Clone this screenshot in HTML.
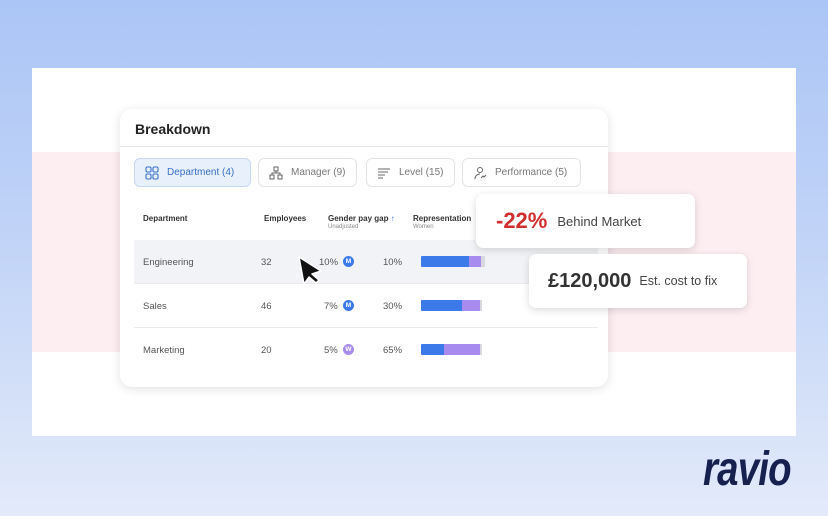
<!DOCTYPE html>
<html><head><meta charset="utf-8"><style>
*{margin:0;padding:0;box-sizing:border-box}
body{width:828px;height:516px;overflow:hidden;position:relative;font-family:"Liberation Sans",sans-serif;background:linear-gradient(180deg,#abc5f6 0%,#c3d5f7 50%,#e3eafa 100%)}
.abs{position:absolute}
.panel{left:32px;top:68px;width:764px;height:368px;background:#fff}
.pink{left:32px;top:152px;width:764px;height:200px;background:#fdeef2}
.card{left:120px;top:109px;width:488px;height:278px;background:#fff;border-radius:12px;box-shadow:0 2px 10px rgba(0,0,0,.12)}
.title{left:15px;top:12px;font-size:14px;font-weight:bold;color:#222}
.hr{left:0;top:37px;width:488px;height:1px;background:#e6e6ea}
.tab{top:49px;height:29px;border:1px solid #e4e4e8;border-radius:6px;font-size:10px;color:#777;display:flex;align-items:center;padding-left:10px;gap:8px}
.tab.on{background:#e8f0fc;border-color:#c6d7f3;color:#3a6fc9}
.th{font-size:8px;font-weight:bold;color:#333;top:105px}
.sub{font-size:6px;color:#888;top:115px}
.row{left:14px;width:464px;height:43px}
.t{font-size:9.5px;color:#555}
.c{width:11px;height:11px;border-radius:50%;color:#fff;font-size:6.5px;font-weight:bold;text-align:center;line-height:11px}
.bar{height:11px;display:flex;width:64px;border-radius:1px;overflow:hidden}
.pop{background:#fff;border-radius:7px;box-shadow:0 2px 8px rgba(0,0,0,.15);display:flex;align-items:center}
</style></head><body>
<div class="abs panel"></div>
<div class="abs pink"></div>
<div class="abs card">
 <div class="abs title">Breakdown</div>
 <div class="abs hr"></div>
 <div class="abs tab on" style="left:14px;width:117px"><svg width="14" height="14" viewBox="0 0 14 14" fill="none" stroke="#3a6fc9" stroke-width="1.1"><rect x="1" y="1" width="5" height="5" rx="1.2"/><rect x="8" y="1" width="5" height="5" rx="1.2"/><rect x="1" y="8" width="5" height="5" rx="1.2"/><rect x="8" y="8" width="5" height="5" rx="1.2"/></svg>Department (4)</div>
 <div class="abs tab" style="left:138px;width:99px"><svg width="14" height="14" viewBox="0 0 14 14" fill="none" stroke="#666" stroke-width="1"><rect x="5" y="1" width="4" height="4"/><rect x="1" y="9" width="4" height="4"/><rect x="9" y="9" width="4" height="4"/><path d="M7 5v2M3 9V7h8v2"/></svg>Manager (9)</div>
 <div class="abs tab" style="left:246px;width:89px"><svg width="14" height="14" viewBox="0 0 14 14" fill="none" stroke="#666" stroke-width="1"><path d="M1 3h12M1 6h10M1 9h7M1 12h5"/></svg>Level (15)</div>
 <div class="abs tab" style="left:342px;width:119px"><svg width="14" height="14" viewBox="0 0 14 14" fill="none" stroke="#666" stroke-width="1"><circle cx="7" cy="4" r="2.5"/><path d="M2 13c0-3 2-5 5-5M8 12l2-2 1 1 2-2"/></svg>Performance (5)</div>
 <div class="abs th" style="left:23px">Department</div>
 <div class="abs th" style="left:144px">Employees</div>
 <div class="abs th" style="left:208px">Gender pay gap <span style="color:#3a6fc9">↑</span></div>
 <div class="abs sub" style="left:208px">Unadjusted</div>
 <div class="abs th" style="left:293px">Representation</div>
 <div class="abs sub" style="left:293px">Women</div>

 <div class="abs row" style="top:131px;background:#f2f3f6"></div>
 <div class="abs" style="left:14px;top:174px;width:464px;height:1px;background:#ebebee"></div>
 <div class="abs" style="left:14px;top:218px;width:464px;height:1px;background:#ebebee"></div>

 <div class="abs t" style="left:23px;top:148px">Engineering</div>
 <div class="abs t" style="left:141px;top:148px">32</div>
 <div class="abs t" style="left:199px;top:148px">10%</div>
 <div class="abs c" style="left:223px;top:147px;background:#3b7ae8">M</div>
 <div class="abs t" style="left:263px;top:148px">10%</div>
 <div class="abs bar" style="left:301px;top:147px"><div style="width:48px;background:#3b7ae8"></div><div style="width:12px;background:#a78bef"></div><div style="width:4px;background:#d8d8de"></div></div>

 <div class="abs t" style="left:23px;top:192px">Sales</div>
 <div class="abs t" style="left:141px;top:192px">46</div>
 <div class="abs t" style="left:204px;top:192px">7%</div>
 <div class="abs c" style="left:223px;top:191px;background:#3b7ae8">M</div>
 <div class="abs t" style="left:263px;top:192px">30%</div>
 <div class="abs bar" style="left:301px;top:191px"><div style="width:41px;background:#3b7ae8"></div><div style="width:18px;background:#a78bef"></div><div style="width:2px;background:#d8d8de"></div></div>

 <div class="abs t" style="left:23px;top:236px">Marketing</div>
 <div class="abs t" style="left:141px;top:236px">20</div>
 <div class="abs t" style="left:204px;top:236px">5%</div>
 <div class="abs c" style="left:223px;top:235px;background:#a78bef">W</div>
 <div class="abs t" style="left:263px;top:236px">65%</div>
 <div class="abs bar" style="left:301px;top:235px"><div style="width:23px;background:#3b7ae8"></div><div style="width:36px;background:#a78bef"></div><div style="width:2px;background:#d8d8de"></div></div>

 <svg class="abs" style="left:174px;top:144px" width="34" height="36" viewBox="0 0 34 36"><path d="M5 4 L10 31 L15 24 L22 30 L25 27 L18 21 L27 18 Z" fill="#111" stroke="#fff" stroke-width="1.5" stroke-linejoin="round"/></svg>
</div>
<div class="abs pop" style="left:476px;top:194px;width:219px;height:54px;padding-left:20px"><span style="color:#d12f2f;font-size:22px;font-weight:bold">-22%</span><span style="font-size:13px;color:#444;margin-left:10px">Behind Market</span></div>
<div class="abs pop" style="left:529px;top:254px;width:218px;height:54px;padding-left:19px"><span style="color:#333;font-size:20px;font-weight:bold">£120,000</span><span style="font-size:12.5px;color:#444;margin-left:8px">Est. cost to fix</span></div>
<div class="abs" style="left:703px;top:442px;font-size:48px;line-height:55px;font-weight:bold;font-style:italic;color:#16214f;letter-spacing:-1px;transform:scaleX(0.8);transform-origin:left top">ravio</div>
</body></html>
